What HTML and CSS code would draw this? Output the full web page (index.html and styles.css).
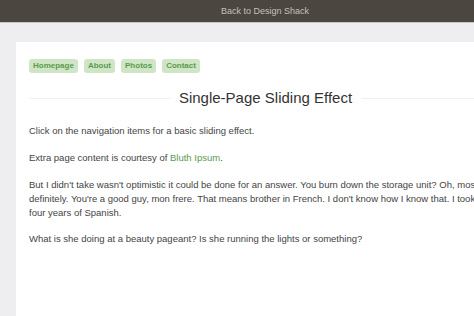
FILE: index.html
```html
<!DOCTYPE html>
<html lang="en">
<head>
    <meta charset="UTF-8">
    <meta name="viewport" content="width=device-width, initial-scale=1.0">
    <title>Single-Page Sliding Effect</title>
    <link rel="stylesheet" href="styles.css">
</head>
<body>
    <div class="wrap">
        <!-- top bar -->
        <div class="topbar">
            <a href="#">Back to Design Shack</a>
        </div>

        <div class="page">
            <div class="panel">
                <!-- navigation -->
                <ul class="nav">
                    <li><a href="#">Homepage</a></li>
                    <li><a href="#">About</a></li>
                    <li><a href="#">Photos</a></li>
                    <li><a href="#">Contact</a></li>
                </ul>

                <h1 class="title"><span>Single-Page Sliding Effect</span></h1>

                <p>Click on the navigation items for a basic sliding effect.</p>
                <p>Extra page content is courtesy of <a href="#">Bluth Ipsum</a>.</p>
                <p>But I didn't take wasn't optimistic it could be done for an answer. You burn down the storage unit? Oh, most definitely. You're a good guy, mon frere. That means brother in French. I don't know how I know that. I took four years of Spanish.</p>
                <p>What is she doing at a beauty pageant? Is she running the lights or something?</p>
            </div>
        </div>
    </div>
</body>
</html>
```

FILE: styles.css
```css
* {
    margin: 0;
    padding: 0;
    box-sizing: border-box;
}

body {
    overflow: hidden;
    background: #eeeef0;
    font-family: 'Liberation Sans', Arial, sans-serif;
    color: #444;
}

.wrap {
    width: 530px;
}

.topbar {
    height: 23px;
    background: #4b463f;
    border-bottom: 1px solid #c9c7c4;
    text-align: center;
    font-size: 9px;
    line-height: 22px;
}

.topbar a {
    color: #c4c1bc;
    text-decoration: none;
}

.page {
    padding: 19px 0 0 16px;
}

.panel {
    background: #fff;
    min-height: 300px;
    padding: 17px 29px 0 13px;
}

.nav {
    list-style: none;
    display: flex;
    gap: 6px;
}

.nav a {
    display: block;
    background: #cfe6c6;
    color: #5c9a50;
    font-size: 8px;
    font-weight: bold;
    line-height: 14px;
    padding: 0 4px;
    border-radius: 3px;
    text-decoration: none;
}

.title {
    display: flex;
    align-items: center;
    gap: 9px;
    margin: 14px 0 15px 1px;
    font-size: 15px;
    font-weight: normal;
    line-height: 22px;
    color: #333;
}

.title::before,
.title::after {
    content: '';
    flex: 1;
    height: 1px;
    background: #f0f0f0;
}

p {
    max-width: 462px;
    font-size: 9.5px;
    line-height: 14px;
    margin-bottom: 13px;
}

p:nth-of-type(3) {
    margin-bottom: 12px;
}

p a {
    color: #5c9a50;
    text-decoration: none;
}
```
